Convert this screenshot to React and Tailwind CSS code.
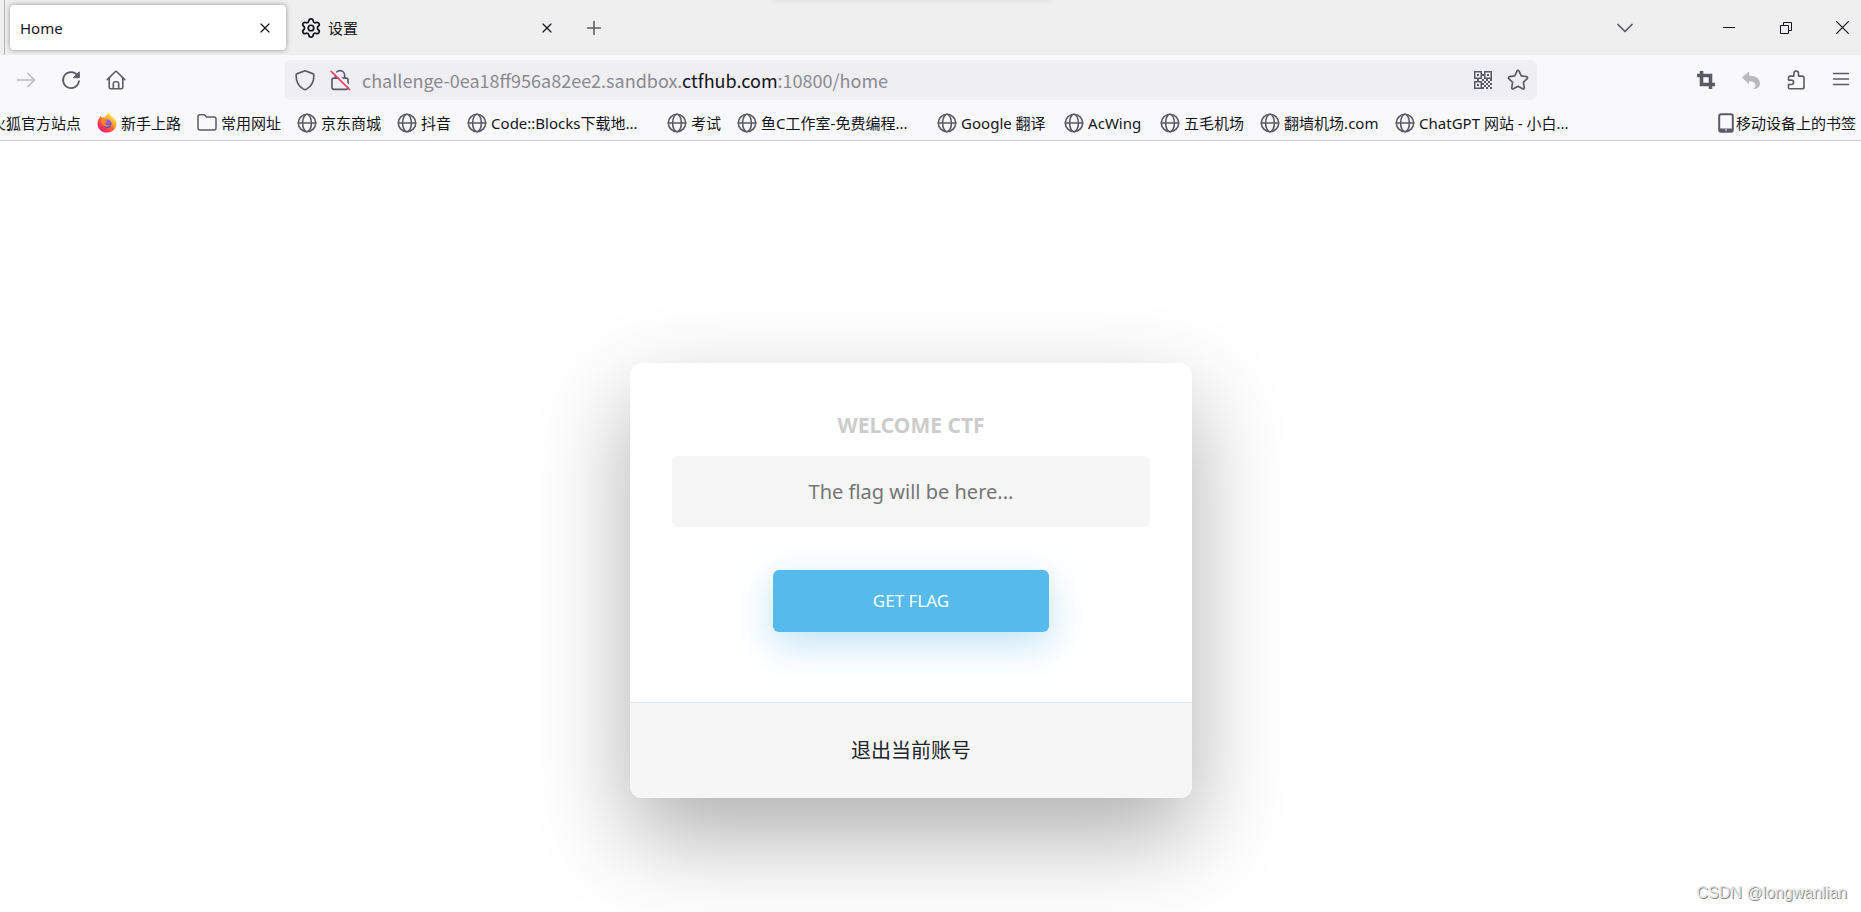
import { X, Plus, Settings, ChevronDown } from 'lucide-react';

const bookmarks = [
    { label: '新手上路', icon: 'firefox' },
    { label: '常用网址', icon: 'folder' },
    { label: '京东商城' },
    { label: '抖音' },
    { label: 'Code::Blocks下载地...', size: 'w-40' },
    { label: '考试' },
    { label: '鱼C工作室-免费编程...', size: 'w-40' },
    { label: 'Google 翻译', size: 'min-w-[87px]' },
    { label: 'AcWing', size: 'min-w-14' },
    { label: '五毛机场' },
    { label: '翻墙机场.com', size: 'min-w-[95px]' },
    { label: 'ChatGPT 网站 - 小白...' },
];

function Icon({ children, className = 'size-5', width = 1.5 }) {
    return (
        <svg
            viewBox="0 0 20 20"
            className={`${className} shrink-0`}
            fill="none"
            stroke="currentColor"
            strokeWidth={width}
            strokeLinecap="round"
            strokeLinejoin="round"
            aria-hidden="true"
        >
            {children}
        </svg>
    );
}

function GlobeIcon() {
    return (
        <Icon width={1.6}>
            <circle cx="10" cy="10" r="8.7" />
            <ellipse cx="10" cy="10" rx="4.4" ry="8.7" />
            <path d="M1.3 10h17.4" />
        </Icon>
    );
}

function FolderIcon() {
    return (
        <Icon>
            <path d="M1 15V3.800C1 2.600 1.900 1.800 3 1.800h3.700c.6 0 1.100.3 1.500.8L9.400 4H17c1.100 0 2 .9 2 2v9c0 1.100-.9 2-2 2H3c-1.100 0-2-.9-2-2z" />
        </Icon>
    );
}

function FirefoxIcon() {
    return (
        <svg viewBox="0 0 20 20" className="size-5 shrink-0" aria-hidden="true">
            <defs>
                <linearGradient id="flame" x1="0.85" y1="0.1" x2="0.2" y2="0.95">
                    <stop offset="0" stopColor="#fff44f" />
                    <stop offset="0.35" stopColor="#ffa436" />
                    <stop offset="0.65" stopColor="#ff4f3c" />
                    <stop offset="1" stopColor="#e31587" />
                </linearGradient>
                <radialGradient id="core" cx="0.6" cy="0.3" r="0.8">
                    <stop offset="0" stopColor="#a05cf5" />
                    <stop offset="1" stopColor="#4b3bb5" />
                </radialGradient>
            </defs>
            <path
                fill="url(#flame)"
                d="M12 0c1.200 1.300 1.600 2.500 3.300 3.900.6.500 1.200 1.100 1.600 1.900l.3-.6c1.800 2.200 2.500 4.300 2.300 6.300-.4 4.700-4.600 8.100-9.600 8.100-5.300 0-9.400-3.900-9.400-8.900 0-2.700 1-4.700 2.200-6.100.1-.8.400-1.500.9-2 .2.900.7 1.500 1.300 1.900 1-.3 2-.2 2.800 0C8.800 2.600 10.200 1 12 0z"
            />
            <circle cx="10.300" cy="10.800" r="4.200" fill="url(#core)" />
            <path fill="#ff8a2b" d="M4.300 7c1.500-.8 3.400-.5 4.500.5 1 .1 1.700.5 1.700 1-.3.900-1.700 1-2.200 1.700-.1 1.300.8 2 2 2.100 1.200.1 1.800-.9 2.900-.5-1 1.900-3.200 2.500-5 1.800C5.500 12.500 4.200 10 4.300 7z" />
        </svg>
    );
}

function ShieldIcon() {
    return (
        <Icon className="size-[22px]">
            <path d="M10 1.600 17 4.200c.7.2 1.100.8 1.100 1.500 0 5.600-2.100 10.100-6.700 12.600-.9.500-1.900.5-2.800 0C4 15.800 1.900 11.300 1.900 5.700c0-.7.4-1.300 1.100-1.500z" />
        </Icon>
    );
}

function InsecureIcon() {
    return (
        <Icon className="size-[22px]">
            <path d="M5.800 8V5.700C5.800 3.300 7.700 1.500 10 1.500s4.200 1.800 4.200 4.200V8" />
            <path d="M4.500 8.300h11c1 0 1.800.8 1.800 1.800v6.600c0 1-.8 1.800-1.800 1.800h-11c-1 0-1.800-.8-1.800-1.800v-6.600c0-1 .8-1.800 1.800-1.800z" />
            <path d="M3.200 1.200 19.600 17" stroke="#efeef3" strokeWidth="2" />
            <path d="M2 2.200 18.800 18.700" stroke="#f0446c" />
        </Icon>
    );
}

function QrIcon() {
    return (
        <svg viewBox="0 0 18 18" className="size-[18px] shrink-0" fill="currentColor" aria-hidden="true">
            <path fillRule="evenodd" d="M0 0h8v8H0zM1.500 1.500v5h5v-5zM10 0h8v8h-8zM11.500 1.500v5h5v-5zM0 10h8v8H0zM1.500 11.500v5h5v-5z" />
            <path d="M3 3h2v2H3zM13 3h2v2h-2zM3 13h2v2H3zM8 3h2v2H8zM3 8h2v2H3zM8 8h2v2H8zM12 8h2v2h-2zM10 10h2v2h-2zM14 10h2v2h-2zM16 8h2v2h-2zM8 12h2v2H8zM12 12h2v2h-2zM16 12h2v2h-2zM10 14h2v2h-2zM14 14h2v2h-2zM8 16h2v2H8zM12 16h2v2h-2zM16 16h2v2h-2z" />
        </svg>
    );
}

function ToolButton({ label, faded, children }) {
    return (
        <button
            type="button"
            aria-label={label}
            className={`flex size-10 items-center justify-center ${faded ? 'text-[#b9b9be]' : 'text-[#5b5b66]'}`}
        >
            {children}
        </button>
    );
}

function TabBar() {
    return (
        <div className="relative flex h-[55px] items-center overflow-hidden bg-[#efefef] pl-1">
            <div className="absolute -top-2 left-[770px] h-2 w-[284px] rounded-full shadow-[0_0_8px_rgba(0,0,0,0.08)]" />
            <div className="h-full w-px bg-[#b5b5b5]" />
            <div className="ml-[5px] flex h-[45px] w-[276px] items-center justify-between rounded bg-white pr-3 pl-[10px] shadow-[0_0_5px_rgba(0,0,0,0.4)]">
                <span>Home</span>
                <button type="button" aria-label="关闭 Home" className="p-px">
                    <X className="size-4" strokeWidth={1.8} />
                </button>
            </div>
            <div className="flex h-[45px] w-[282px] items-center pr-3 pl-[14px]">
                <Settings className="size-[22px]" strokeWidth={1.9} />
                <span className="ml-[6px] flex-1">设置</span>
                <button type="button" aria-label="关闭 设置" className="p-px">
                    <X className="size-4" strokeWidth={1.8} />
                </button>
            </div>
            <button type="button" aria-label="新建标签页" className="ml-[6px] flex size-10 items-center justify-center text-[#5b5b66]">
                <Plus className="size-[22px]" strokeWidth={1.7} />
            </button>
            <div className="flex-1" />
            <button type="button" aria-label="列出所有标签页" className="mr-[55px] flex size-10 items-center justify-center text-[#5b5b66]">
                <ChevronDown className="size-7" strokeWidth={1.5} />
            </button>
            <div className="-mr-[10px] flex shrink-0">
                <button type="button" aria-label="最小化" className="flex h-10 w-[57px] items-center justify-center">
                    <svg viewBox="0 0 12 12" className="size-3" stroke="currentColor" aria-hidden="true">
                        <path d="M0 5.500h12" />
                    </svg>
                </button>
                <button type="button" aria-label="还原" className="flex h-10 w-[57px] items-center justify-center">
                    <svg viewBox="0 0 12 12" className="size-3" fill="none" stroke="currentColor" aria-hidden="true">
                        <path d="M.5 3.500h8v8h-8zM3.500 3.500v-3h8v8h-3" />
                    </svg>
                </button>
                <button type="button" aria-label="关闭" className="flex h-10 w-[57px] items-center justify-center">
                    <svg viewBox="0 0 13 13" className="size-[13px]" stroke="currentColor" strokeWidth="1.200" aria-hidden="true">
                        <path d="M.3.3l12.400 12.400M12.700.3.3 12.700" />
                    </svg>
                </button>
            </div>
        </div>
    );
}

function Toolbar() {
    return (
        <div className="flex items-center pt-[5px]">
            <div className="flex gap-[5px] pl-[6px]">
                <ToolButton label="前进" faded>
                    <Icon>
                        <path d="M1.500 10h17M11.800 3.200 18.500 10l-6.700 6.800" />
                    </Icon>
                </ToolButton>
                <ToolButton label="重新载入">
                    <Icon width={1.7}>
                        <path d="M16.600 5.500A8 8 0 1 0 18 11" />
                        <path d="M18.300 2.200v5.500h-5.500z" fill="currentColor" strokeWidth="1" />
                    </Icon>
                </ToolButton>
                <ToolButton label="主页">
                    <Icon width={1.6}>
                        <path d="M1.200 9.600 9.200 1.700c.5-.4 1.100-.4 1.600 0l8 7.900" />
                        <path d="M3.200 8v9c0 .9.700 1.700 1.600 1.700h10.400c.9 0 1.600-.8 1.600-1.700V8" />
                        <path d="M7.300 18.500v-5c0-1 .7-1.700 1.600-1.700h2.200c.9 0 1.600.7 1.600 1.700v5" />
                    </Icon>
                </ToolButton>
            </div>
            <div className="relative mx-[149px] flex h-10 min-w-0 flex-1 items-center rounded-md bg-[#efeef3] pr-2 pl-[9px] text-[#5b5b66]">
                <ShieldIcon />
                <span className="ml-[13px] flex">
                    <InsecureIcon />
                </span>
                <span className="ml-[11px] flex-1 truncate font-['Noto_Sans_CJK_SC',sans-serif] text-[18px] leading-7 text-[#8a8a90]">
                    challenge-0ea18ff956a82ee2.sandbox.<span className="text-[#15141a]">ctfhub.com</span>:10800/home
                </span>
                <input type="text" aria-label="地址栏" className="absolute inset-y-0 right-20 left-[77px] bg-transparent outline-none" />
                <button type="button" aria-label="二维码">
                    <QrIcon />
                </button>
                <button type="button" aria-label="收藏" className="ml-[15px]">
                    <Icon className="size-[22px]">
                        <path d="M9.100 1.900c.4-.8 1.400-.8 1.800 0l2.100 4.300 4.800.7c.9.100 1.200 1.200.6 1.800l-3.500 3.400.8 4.800c.2.900-.8 1.500-1.500 1.100L10 15.700 5.800 18c-.7.4-1.700-.2-1.500-1.100l.8-4.800L1.600 8.700C1 8.100 1.300 7 2.200 6.900L7 6.200z" />
                    </Icon>
                </button>
            </div>
            <div className="flex gap-[5px]">
                <ToolButton label="截图">
                    <svg viewBox="0 0 18 18" className="size-[18px]" fill="none" stroke="currentColor" strokeWidth="3.600" aria-hidden="true">
                        <path d="M4.500 0v13.500H18M0 4.500h13.500V18" />
                    </svg>
                </ToolButton>
                <ToolButton label="撤销" faded>
                    <svg viewBox="0 0 18 18" className="size-[18px]" fill="currentColor" aria-hidden="true">
                        <path d="M0 6.500 7 .5v4c6.500 0 11 3 11 8.300 0 2.300-1.700 4.200-4.500 5.200H11c1.700-.9 2.500-2.200 2.500-3.700 0-2.500-2.300-4-6.500-4v3z" />
                    </svg>
                </ToolButton>
                <ToolButton label="扩展">
                    <Icon width={1.6}>
                        <path d="M3.500 18.800h12.700c1 0 1.800-.8 1.800-1.800V7.800c0-1-.8-1.700-1.800-1.700h-3.700V3.300c0-1.200-1.100-2.200-2.300-2.200S7.900 2.100 7.900 3.300v2.800H4.300c-1 0-1.800.7-1.800 1.700v2.300h2.800c1.200 0 2.300 1 2.300 2.200s-1.100 2.200-2.300 2.200H2.500v3.300c0 .6.400 1 1 1z" />
                    </Icon>
                </ToolButton>
                <ToolButton label="菜单">
                    <Icon>
                        <path d="M2.500 3.500h15M2.500 9h15M2.500 14.500h15" />
                    </Icon>
                </ToolButton>
            </div>
        </div>
    );
}

function BookmarkBar() {
    return (
        <nav className="flex h-[41px] items-center justify-between overflow-hidden border-b border-[#cccccc] pt-[5px] pr-[5px] whitespace-nowrap">
            <div className="-ml-[9px] flex gap-4">
                <a href="#firefox">火狐官方站点</a>
                {bookmarks.map((item) => (
                    <a key={item.label} href="#bookmark" className="flex items-center gap-1 text-[#5b5b66]">
                        {item.icon === 'firefox' ? <FirefoxIcon /> : item.icon === 'folder' ? <FolderIcon /> : <GlobeIcon />}
                        <span className={`text-[#15141a] ${item.size ?? ''}`}>{item.label}</span>
                    </a>
                ))}
            </div>
            <a href="#mobile" className="flex items-center">
                <svg viewBox="0 0 16 20" className="mr-[2px] h-5 w-4 text-[#5b5b66]" aria-hidden="true">
                    <rect x="1.200" y="1.200" width="13.600" height="17.600" rx="1.800" fill="none" stroke="currentColor" strokeWidth="2" />
                    <path d="M1 15.500h14V18H1z" fill="currentColor" />
                    <path d="M7 17h2" stroke="#f9f9fb" strokeWidth="1.200" />
                </svg>
                移动设备上的书签
            </a>
        </nav>
    );
}

function FlagCard() {
    return (
        <form className="w-[562px] overflow-hidden rounded-xl bg-white text-center shadow-[0_38px_94px_rgba(0,0,0,0.32)]">
            <div className="flex flex-col items-center px-[42px] pt-[50px] pb-[70px]">
                <h2 className="text-[21px] leading-6 font-bold text-[#cccccc]">WELCOME CTF</h2>
                <input
                    type="text"
                    aria-label="Flag"
                    placeholder="The flag will be here..."
                    className="mt-[19px] h-[71px] w-full rounded-md bg-[#f6f6f6] text-center text-[20px] outline-none placeholder:text-[#757575]"
                />
                <button
                    type="button"
                    className="mt-[43px] h-[62px] w-[276px] rounded-md bg-[#56baed] text-[17px] text-white shadow-[0_12px_38px_rgba(95,186,233,0.4)]"
                >
                    GET FLAG
                </button>
            </div>
            <div className="flex h-24 items-center justify-center border-t border-[#dce8f1] bg-[#f6f6f6]">
                <a href="#logout" className="text-[20px] leading-6 text-[#212529]">退出当前账号</a>
            </div>
        </form>
    );
}

export default function App() {
    return (
        <div className="relative flex min-h-screen flex-col bg-white font-['Noto_Sans','Noto_Sans_CJK_SC',sans-serif] text-[15px] leading-5 text-[#15141a]">
            <header className="bg-[#f9f9fb]">
                <TabBar />
                <Toolbar />
                <BookmarkBar />
            </header>
            <main className="flex flex-1 justify-center overflow-hidden pt-[222px] pr-[39px]">
                <div>
                    <FlagCard />
                </div>
            </main>
            <p className="absolute right-[14px] bottom-[9px] font-['Liberation_Sans',sans-serif] text-[16px] leading-5 text-[#e4e4e4] [text-shadow:1px_1px_0_#8a8a8a]">
                CSDN @longwanlian
            </p>
        </div>
    );
}
